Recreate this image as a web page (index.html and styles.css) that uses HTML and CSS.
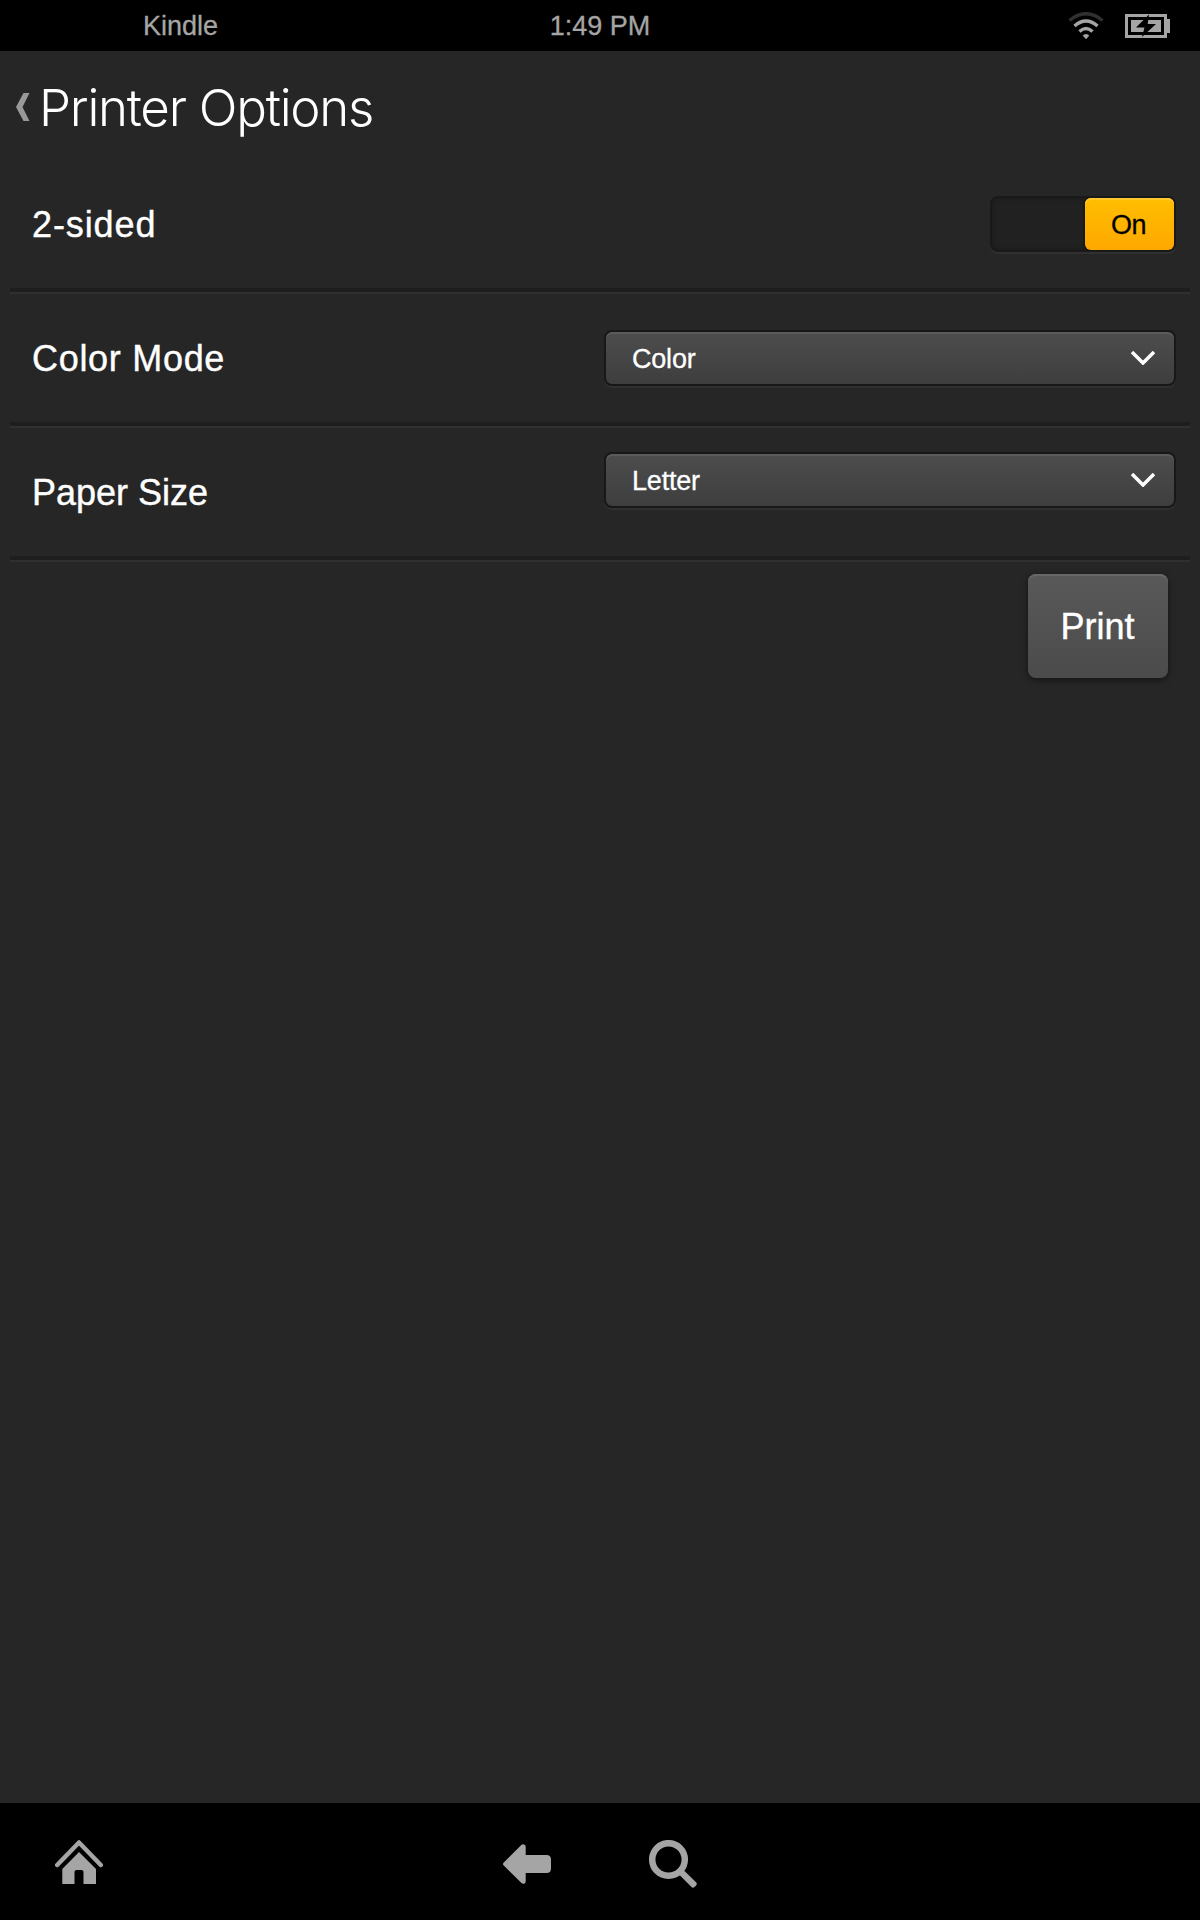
FILE: index.html
```html
<!DOCTYPE html>
<html lang="en">
<head>
  <meta charset="UTF-8">
  <title>Printer Options</title>
  <link rel="stylesheet" href="styles.css">
</head>
<body>

  <div class="status-bar">
    <span class="device">Kindle</span>
    <span class="clock">1:49 PM</span>
    <div class="status-icons">
      <svg class="wifi" width="36" height="28" viewBox="0 0 36 28">
        <path class="weak" d="M1.500 8.500Q18 -5 34.500 8.500"/>
        <path d="M6.500 14Q18 4 29.500 14"/>
        <path d="M11.500 19.500Q18 13.500 24.500 19.500"/>
        <path class="dot" d="M15 23.500Q18 21 21 23.500L18 27Z"/>
      </svg>
      <svg class="battery" width="45" height="24" viewBox="0 0 45 24">
        <path d="M0 0H42V5H45V19H42V24H0ZM3 3V21H39V3Z" fill-rule="evenodd"/>
        <path d="M6 6H36V18H6Z"/>
        <path class="bolt" d="M24 0.500L22.700 10H31L17 23L19.500 13.500H11Z"/>
      </svg>
    </div>
  </div>

  <div class="header">
    <svg class="chevron-left" width="14" height="28" viewBox="0 0 14 28">
      <path d="M7.500 0H13.500L6.500 14L13.500 28H7.500L0 14Z"/>
    </svg>
    <h1>Printer Options</h1>
  </div>

  <form class="options">
    <div class="row">
      <span class="label two-sided">2-sided</span>
      <div class="toggle"><div class="knob">On</div></div>
    </div>
    <div class="row">
      <span class="label color-mode">Color Mode</span>
      <div class="select">
        <span>Color</span>
        <svg width="24" height="14" viewBox="0 0 24 14"><path d="M1 1L12 12L23 1"/></svg>
      </div>
    </div>
    <div class="row">
      <span class="label">Paper Size</span>
      <div class="select paper">
        <span>Letter</span>
        <svg width="24" height="14" viewBox="0 0 24 14"><path d="M1 1L12 12L23 1"/></svg>
      </div>
    </div>
    <button type="button" class="print">Print</button>
  </form>

  <!-- bottom navigation -->
  <div class="nav-bar">
    <svg class="home" width="48" height="44" viewBox="0 0 48 44">
      <path class="roof" d="M2.200 25L24 2.500L45.800 25"/>
      <path d="M24 12L41 29V44H28.500V32Q28.500 30 26.500 30H21.500Q19.500 30 19.500 32V44H7.300V29Z"/>
    </svg>
    <svg class="back" width="48" height="40" viewBox="0 0 48 40">
      <path d="M0.500 18.700L18.500 0.700Q20 -0.500 22 1Q22.700 1.700 22.700 3V11H43.500Q48 11 48 15.500V24.500Q48 29 43.500 29H22.700V37Q22.700 38.500 22 39.200Q20 40.500 18.500 39L0.500 21.300Q-0.500 20 0.500 18.700Z"/>
    </svg>
    <svg class="search" width="48" height="48" viewBox="0 0 48 48">
      <circle cx="19.500" cy="19.500" r="16.300"/>
      <path d="M31 31.500L35.500 31L47.300 42.500Q48.500 44 47 45.500L45.500 47Q44 48.500 42.500 47L30.500 35Z"/>
    </svg>
  </div>

</body>
</html>
```

FILE: styles.css
```css
*, *::before, *::after {
  box-sizing: border-box;
}
html, body {
  margin: 0;
  padding: 0;
}
body {
  height: 1920px;
  display: flex;
  flex-direction: column;
  background-color: #262626;
  color: #fff;
  font-family: "Liberation Sans", Arial, sans-serif;
}
svg {
  display: block;
  flex-shrink: 0;
}

/* status bar */
.status-bar {
  display: grid;
  grid-template-columns: 1fr auto 1fr;
  align-items: center;
  height: 51px;
  padding-right: 30px;
  padding-left: 30px;
  background-color: #000;
  color: #a5a5a5;
  font-size: 27px;
  -webkit-text-stroke: 0.3px;
}
.device {
  padding-top: 2px;
  padding-left: 113px;
}
.clock {
  padding-top: 2px;
}
.status-icons {
  display: flex;
  align-items: center;
  justify-content: flex-end;
  gap: 21px;
}
.wifi path {
  fill: none;
  stroke: #a5a5a5;
  stroke-width: 3.5;
}
.wifi .weak {
  stroke: #303030;
}
.wifi .dot {
  fill: #a5a5a5;
  stroke-width: 0.5;
}
.battery path {
  fill: #a5a5a5;
}
.battery .bolt {
  fill: #000;
}

/* title */
.header {
  display: flex;
  align-items: center;
  height: 109px;
  padding-left: 16px;
  padding-top: 3px;
}
.chevron-left {
  fill: #999;
}
h1 {
  margin: 0 0 0 9px;
  font-family: Inter, "Liberation Sans", sans-serif;
  font-size: 51px;
  font-weight: 300;
  letter-spacing: -1.25px;
}

/* option rows */
.options {
  flex: 1;
  display: flex;
  flex-direction: column;
  padding: 0 10px;
}
.row {
  display: flex;
  align-items: center;
  justify-content: space-between;
  height: 134px;
  padding: 0 14px 4px 22px;
  border-bottom: 2px solid #303030;
  box-shadow: inset 0 -4px 0 #1e1e1e;
}
.label {
  padding-top: 2px;
  font-size: 36px;
  -webkit-text-stroke: 0.4px;
}
.two-sided {
  letter-spacing: 0.9px;
}
.color-mode {
  letter-spacing: 0.7px;
}

.toggle {
  display: flex;
  justify-content: flex-end;
  width: 186px;
  height: 56px;
  border: 2px solid #191919;
  border-radius: 8px;
  background-color: #212121;
  box-shadow: 0 2px 0 #303030, inset 0 0 5px #1a1a1a;
}
.knob {
  width: 89px;
  height: 52px;
  padding-right: 2px;
  border-radius: 6px;
  background: linear-gradient(#ffbe00, #ffa800);
  box-shadow: inset 0 2px 0 #ffc92e, -2px 0 0 #191919;
  color: #000;
  font-size: 27px;
  line-height: 54px;
  text-align: center;
  letter-spacing: -0.5px;
  -webkit-text-stroke: 0.3px;
}

.select {
  display: flex;
  align-items: center;
  justify-content: space-between;
  width: 572px;
  height: 56px;
  padding: 0 19px 0 26px;
  border: 2px solid #181818;
  border-radius: 8px;
  background: linear-gradient(#4d4d4d, #3e3e3e);
  box-shadow: 0 2px 0 #303030, inset 0 2px 0 #5b5b5b;
  font-size: 27px;
}
.select span {
  padding-top: 2px;
  letter-spacing: -0.2px;
  -webkit-text-stroke: 0.3px;
}
.select path {
  fill: none;
  stroke: #fff;
  stroke-width: 3.5;
}
.paper {
  align-self: flex-start;
  margin-top: 24px;
}

.print {
  align-self: flex-end;
  width: 140px;
  height: 104px;
  margin: 12px 22px 0 0;
  padding: 2px 1px 0 0;
  border: 0;
  border-radius: 8px;
  background: linear-gradient(#595959, #4b4b4b);
  box-shadow: inset 0 2px 0 #676767, 0 2px 6px rgba(0, 0, 0, 0.5);
  color: #fff;
  font-family: inherit;
  font-size: 36px;
  -webkit-text-stroke: 0.4px;
}

/* bottom navigation */
.nav-bar {
  display: flex;
  align-items: flex-start;
  height: 117px;
  padding: 37px 55px 0;
  background-color: #000;
  fill: #a5a5a5;
}
.roof {
  fill: none;
  stroke: #a5a5a5;
  stroke-width: 4.5;
  stroke-linecap: round;
  stroke-linejoin: round;
}
.back {
  margin: 4px 98px 0 400px;
}
.search circle {
  fill: none;
  stroke: #a5a5a5;
  stroke-width: 6.5;
}
```
